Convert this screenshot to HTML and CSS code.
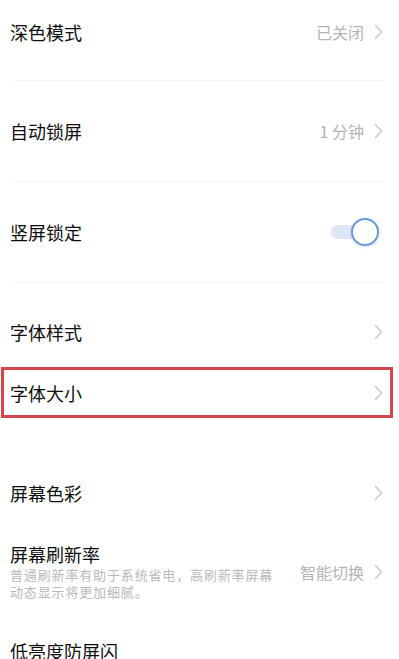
FILE: index.html
```html
<!DOCTYPE html>
<html lang="zh-CN">
<head>
<meta charset="utf-8">
<title>显示与亮度</title>
<link rel="stylesheet" href="styles.css">
</head>
<body>
<div class="list">
  <div class="row r1">
    <span class="title">深色模式</span>
    <span class="side"><span class="value">已关闭</span><svg class="chev" viewBox="0 0 9 16"><polyline points="1.5,1.5 7.5,8 1.5,14.5"/></svg></span>
  </div>
  <div class="divider"></div>
  <div class="row r2">
    <span class="title">自动锁屏</span>
    <span class="side"><span class="value">1 分钟</span><svg class="chev" viewBox="0 0 9 16"><polyline points="1.5,1.5 7.5,8 1.5,14.5"/></svg></span>
  </div>
  <div class="divider"></div>
  <div class="row r2">
    <span class="title">竖屏锁定</span>
    <span class="toggle"><span class="track"></span><span class="knob"></span></span>
  </div>
  <div class="divider"></div>
  <div class="row r4">
    <span class="title">字体样式</span>
    <span class="side"><svg class="chev" viewBox="0 0 9 16"><polyline points="1.5,1.5 7.5,8 1.5,14.5"/></svg></span>
  </div>
  <div class="row hl">
    <span class="title">字体大小</span>
    <span class="side"><svg class="chev" viewBox="0 0 9 16"><polyline points="1.5,1.5 7.5,8 1.5,14.5"/></svg></span>
  </div>
  <div class="row r6">
    <span class="title">屏幕色彩</span>
    <span class="side"><svg class="chev" viewBox="0 0 9 16"><polyline points="1.5,1.5 7.5,8 1.5,14.5"/></svg></span>
  </div>
  <div class="row r7">
    <div class="textcol">
      <div class="title">屏幕刷新率</div>
      <div class="sub">普通刷新率有助于系统省电，高刷新率屏幕动态显示将更加细腻。</div>
    </div>
    <span class="side"><span class="value">智能切换</span><svg class="chev" viewBox="0 0 9 16"><polyline points="1.5,1.5 7.5,8 1.5,14.5"/></svg></span>
  </div>
  <div class="row r8">
    <span class="title">低亮度防屏闪</span>
  </div>
</div>
</body>
</html>
```

FILE: styles.css
```css
* { box-sizing: border-box; }
html, body {
  margin: 0;
  padding: 0;
  background: #ffffff;
}
body {
  width: 399px;
  height: 659px;
  overflow: hidden;
  font-family: "Noto Sans CJK SC", "Noto Sans", sans-serif;
  color: #1c1c1c;
}
.list {
  display: flex;
  flex-direction: column;
}
.row {
  display: flex;
  align-items: center;
  justify-content: space-between;
  padding: 0 16px 0 10px;
}
.title {
  font-size: 18px;
  line-height: 22px;
  font-weight: 400;
  color: #0e0e0e;
  white-space: nowrap;
}
.side {
  display: flex;
  align-items: center;
  gap: 10px;
}
.value {
  font-size: 16px;
  line-height: 22px;
  color: #b4b4b4;
}
.chev {
  width: 9px;
  height: 16px;
  display: block;
}
.chev polyline {
  fill: none;
  stroke: #c6c6c6;
  stroke-width: 1.3;
  stroke-linecap: round;
  stroke-linejoin: round;
}
.divider {
  height: 1px;
  margin: 0 14px 0 10px;
  background: #f7f7f7;
}
.r1 {
  height: 80px;
  padding-bottom: 16px;
}
.r2 {
  height: 100px;
}
.r4 {
  height: 84px;
  padding-top: 14px;
}
.hl {
  height: 51px;
  margin-left: 1px;
  width: 392px;
  border: 3px solid #d4464c;
  padding: 0 7px 0 6px;
}
.r6 {
  height: 126px;
  padding-top: 24px;
}
.r7 {
  align-items: center;
}
.textcol {
  display: flex;
  flex-direction: column;
  gap: 1px;
}
.r7 .title {
  line-height: 21px;
}
.sub {
  width: 270px;
  font-size: 13px;
  letter-spacing: 0.85px;
  line-height: 17px;
  color: #b9b9b9;
}
.r8 {
  padding-top: 40px;
}
.toggle {
  position: relative;
  width: 48px;
  height: 28px;
  margin-right: 4px;
}
.track {
  position: absolute;
  left: 0;
  top: 7px;
  width: 40px;
  height: 14px;
  border-radius: 7px;
  background: #dde7f6;
}
.knob {
  position: absolute;
  right: 0;
  top: 0;
  width: 28px;
  height: 28px;
  border-radius: 50%;
  background: #ffffff;
  border: 2.5px solid #6c9ad4;
  box-shadow: 0 1px 3px rgba(80, 120, 180, 0.25);
}
```
